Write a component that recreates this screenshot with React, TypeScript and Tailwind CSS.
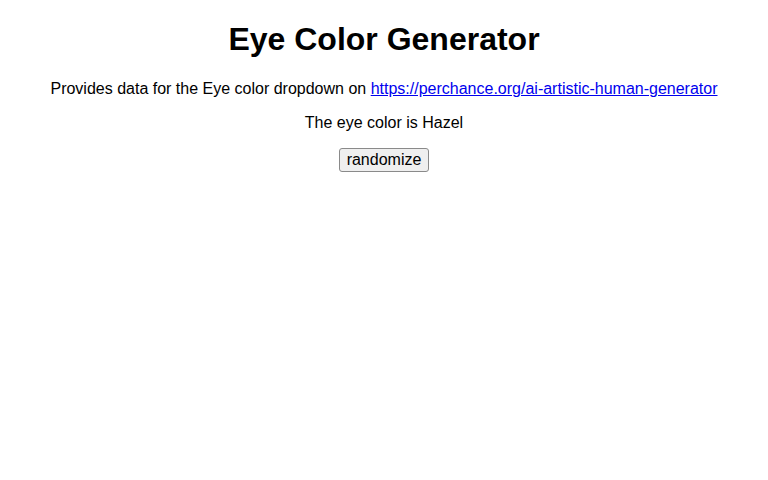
export default function App() {
  return (
    <div className="min-h-[480px] bg-white text-black text-center" style={{ fontFamily: '"Liberation Sans", Arial, sans-serif' }}>
      <div className="pt-[21px]">
        <h1 className="text-[32px] font-bold leading-[37px]">Eye Color Generator</h1>
        <p className="mt-[22px] text-[16px] leading-[18px]">
          Provides data for the Eye color dropdown on{" "}
          <a href="#" className="text-[#0000ee] underline">
            https://perchance.org/ai-artistic-human-generator
          </a>
        </p>
        <p className="mt-4 text-[16px] leading-[18px]">The eye color is Hazel</p>
        <div className="mt-4">
          <button className="px-[7px] py-[2px] text-[16px] leading-[18px] bg-[#efefef] border border-[#8a8a8a] rounded-[3px]">
            randomize
          </button>
        </div>
      </div>
    </div>
  );
}
